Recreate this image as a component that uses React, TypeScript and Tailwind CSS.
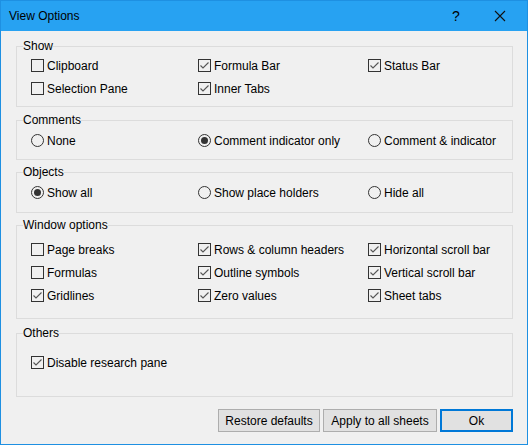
import React from "react";

type Item = { label: string; on: boolean };

function CheckBox({ on }: { on: boolean }) {
    return (
        <span className="w-[13px] h-[13px] border border-[#333333] shrink-0 flex items-center justify-center">
            {on && (
                <svg width="11" height="11" viewBox="0 0 11 11">
                    <path d="M1.5 5.5 L4 8 L9.5 2.5" fill="none" stroke="#555555" strokeWidth="1.1" />
                </svg>
            )}
        </span>
    );
}

function Radio({ on }: { on: boolean }) {
    return (
        <span className="w-[13px] h-[13px] rounded-full border border-[#333333] shrink-0 flex items-center justify-center">
            {on && <span className="w-[7px] h-[7px] rounded-full bg-[#333333]" />}
        </span>
    );
}

function Group({
    title,
    items,
    radio = false,
    className = "",
}: {
    title: string;
    items: Item[];
    radio?: boolean;
    className?: string;
}) {
    return (
        <fieldset className={`border border-[#dcdcdc] px-[6px] ${className}`}>
            <legend className="leading-[14px]">{title}</legend>
            <div className="ml-[8px] grid grid-cols-[167px_170px_1fr]">
                {items.map((it) => (
                    <div key={it.label} className="flex items-center h-[23px] gap-[3px] whitespace-nowrap">
                        {radio ? <Radio on={it.on} /> : <CheckBox on={it.on} />}
                        <span>{it.label}</span>
                    </div>
                ))}
            </div>
        </fieldset>
    );
}

export default function App() {
    return (
        <div className="w-[528px] h-[445px] border border-[#1e90e2] bg-[#f0f0f0] flex flex-col text-[12px] leading-[14px] text-black font-['Liberation_Sans',Arial,sans-serif]">
            <div className="h-[30px] bg-[#27a2f2] flex items-center pl-[8px] shrink-0">
                <span className="flex-1">View Options</span>
                <span className="w-[14px] text-[14px] text-center mr-[31px]">?</span>
                <svg width="12" height="12" viewBox="0 0 12 12" className="mr-[21px]">
                    <path d="M1 1 L11 11 M11 1 L1 11" stroke="#111111" strokeWidth="1.1" />
                </svg>
            </div>
            <div className="pl-[15px] pr-[14px] flex flex-col">
                <Group
                    title="Show"
                    className="mt-[8px] pt-[1px] pb-[6px]"
                    items={[
                        { label: "Clipboard", on: false },
                        { label: "Formula Bar", on: true },
                        { label: "Status Bar", on: true },
                        { label: "Selection Pane", on: false },
                        { label: "Inner Tabs", on: true },
                    ]}
                />
                <Group
                    title="Comments"
                    radio
                    className="mt-[6px] pt-[2px] pb-[7px]"
                    items={[
                        { label: "None", on: false },
                        { label: "Comment indicator only", on: true },
                        { label: "Comment & indicator", on: false },
                    ]}
                />
                <Group
                    title="Objects"
                    radio
                    className="mt-[5px] pt-[2px] pb-[8px]"
                    items={[
                        { label: "Show all", on: true },
                        { label: "Show place holders", on: false },
                        { label: "Hide all", on: false },
                    ]}
                />
                <Group
                    title="Window options"
                    className="mt-[5px] pt-[6px] pb-[11px]"
                    items={[
                        { label: "Page breaks", on: false },
                        { label: "Rows & column headers", on: true },
                        { label: "Horizontal scroll bar", on: true },
                        { label: "Formulas", on: false },
                        { label: "Outline symbols", on: true },
                        { label: "Vertical scroll bar", on: true },
                        { label: "Gridlines", on: true },
                        { label: "Zero values", on: true },
                        { label: "Sheet tabs", on: true },
                    ]}
                />
                <Group
                    title="Others"
                    className="mt-[7px] pt-[11px] pb-[22px]"
                    items={[{ label: "Disable research pane", on: true }]}
                />
                <div className="mt-[12px] flex justify-end gap-[3px]">
                    <button className="w-[102px] h-[23px] bg-[#e1e1e1] border border-[#adadad]">
                        Restore defaults
                    </button>
                    <button className="w-[114px] h-[23px] bg-[#e1e1e1] border border-[#adadad]">
                        Apply to all sheets
                    </button>
                    <button className="w-[73px] h-[23px] bg-[#e1e1e1] border-2 border-[#0078d7]">
                        Ok
                    </button>
                </div>
            </div>
        </div>
    );
}
